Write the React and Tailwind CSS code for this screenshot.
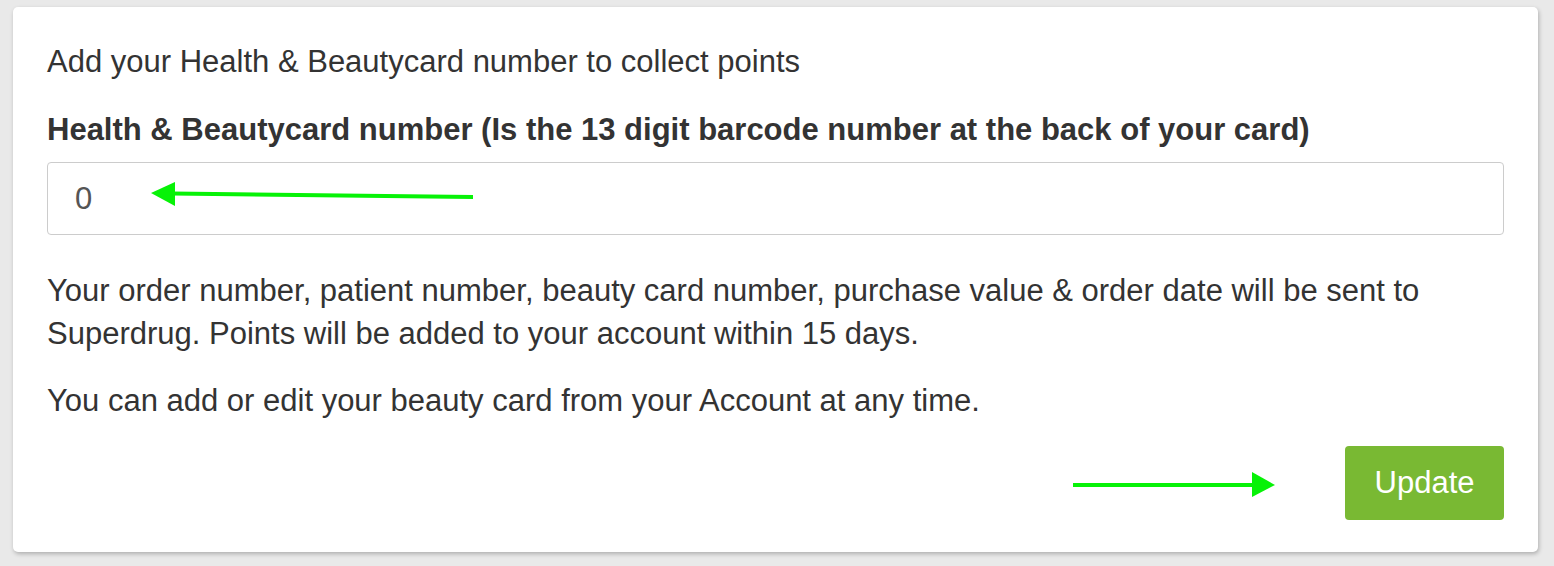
import React from 'react';

function ArrowLeft() {
  return (
    <svg className="absolute left-[148px] top-[180px]" width="330" height="30" viewBox="0 0 330 30">
      <line x1="24" y1="13.5" x2="325" y2="17" stroke="#07f207" strokeWidth="4" />
      <polygon points="3,13 27,2 27,26" fill="#07f207" />
    </svg>
  );
}

function ArrowRight() {
  return (
    <svg className="absolute left-[1072px] top-[471px]" width="210" height="30" viewBox="0 0 210 30">
      <line x1="1" y1="14" x2="182" y2="14" stroke="#07f207" strokeWidth="4" />
      <polygon points="203,14 180,1 180,26" fill="#07f207" />
    </svg>
  );
}

export default function App() {
  return (
    <div className="w-[1554px] h-[566px] bg-[#e9e9e9] pt-[7px] pl-[13px] font-['Liberation_Sans',Arial,sans-serif] text-[#333] relative">
      <div className="w-[1525px] h-[545px] bg-white rounded-[5px] shadow-[1px_2px_4px_rgba(0,0,0,0.25)] px-[34px] pt-[33px]">
        <p className="text-[31px] leading-[43px]">Add your Health &amp; Beautycard number to collect points</p>
        <label className="block mt-[25px] text-[31px] leading-[43px] font-bold">
          Health &amp; Beautycard number (Is the 13 digit barcode number at the back of your card)
        </label>
        <input
          type="text"
          defaultValue="0"
          className="mt-[11px] block w-full h-[73px] border-[1.5px] border-[#cccccc] rounded-[4px] px-[27px] text-[31px] text-[#555] outline-none font-['Liberation_Sans',Arial,sans-serif]"
        />
        <p className="mt-[34px] text-[31px] leading-[43px]">
          Your order number, patient number, beauty card number, purchase value &amp; order date will be sent to
          Superdrug. Points will be added to your account within 15 days.
        </p>
        <p className="mt-[24px] text-[31px] leading-[43px]">You can add or edit your beauty card from your Account at any time.</p>
        <div className="flex justify-end mt-[24px]">
          <button className="h-[74px] w-[159px] bg-[#79b933] text-white text-[31px] rounded-[4px]">Update</button>
        </div>
      </div>
      <ArrowLeft />
      <ArrowRight />
    </div>
  );
}
